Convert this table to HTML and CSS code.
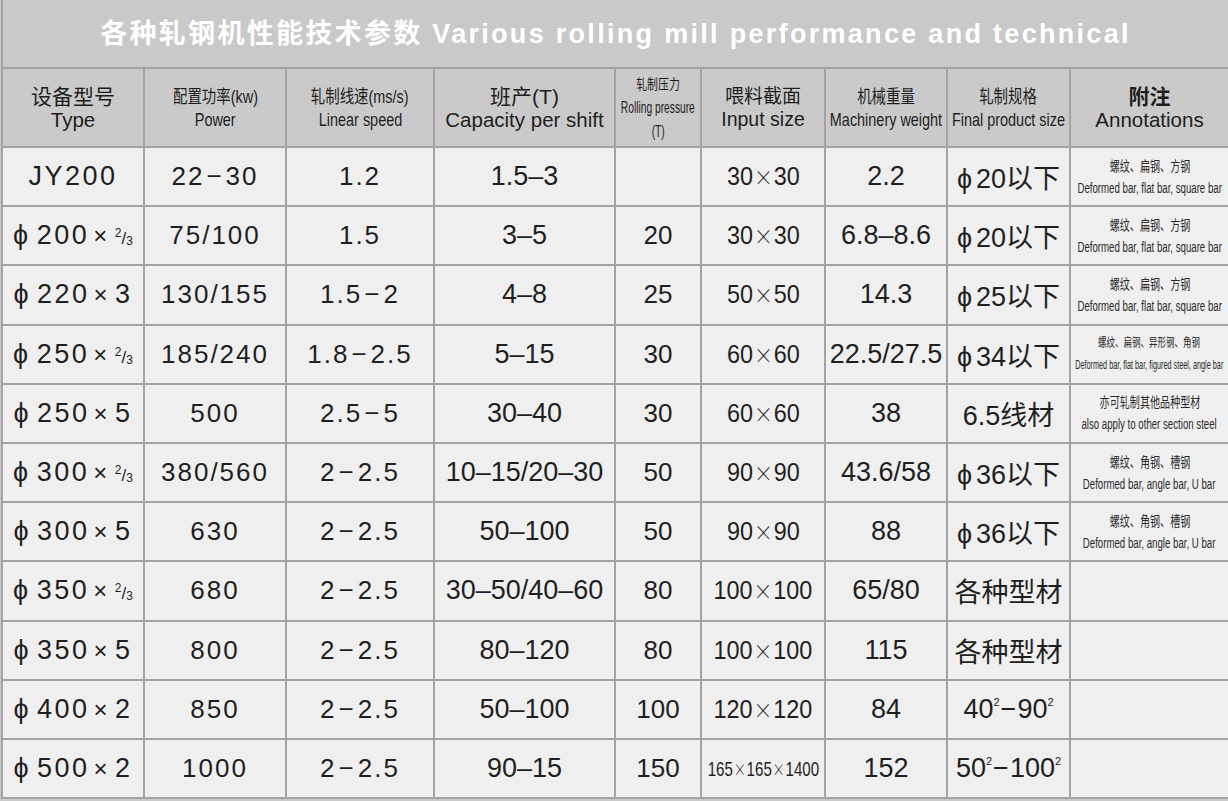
FILE: index.html
```html
<!DOCTYPE html>
<html lang="zh-CN">
<head>
<meta charset="utf-8">
<title>各种轧钢机性能技术参数</title>
<link rel="stylesheet" href="styles.css">
</head>
<body>
<div class="sheet">
  <div class="title">各种轧钢机性能技术参数 Various rolling mill performance and technical</div>
  <div class="grid">
    <div class="h"><span class="zh">设备型号</span><span class="en">Type</span></div>
    <div class="h"><span class="nar">配置功率(kw)</span><span class="nar">Power</span></div>
    <div class="h"><span class="nar">轧制线速(ms/s)</span><span class="nar">Linear speed</span></div>
    <div class="h"><span class="zh">班产(T)</span><span class="en">Capacity per shift</span></div>
    <div class="h tri"><span class="tz">轧制压力</span><span class="te">Rolling pressure</span><span class="te">(T)</span></div>
    <div class="h"><span class="zh2">喂料截面</span><span class="en2">Input size</span></div>
    <div class="h"><span class="nar">机械重量</span><span class="nar">Machinery weight</span></div>
    <div class="h"><span class="nar">轧制规格</span><span class="nar">Final product size</span></div>
    <div class="h"><span class="zh bold">附注</span><span class="en">Annotations</span></div>

    <!-- row 1 -->
    <div class="c k"><span>JY200</span></div>
    <div class="c p">22<span class="d">−</span>30</div>
    <div class="c s">1.2</div>
    <div class="c cap">1.5–3</div>
    <div class="c rp"></div>
    <div class="c"><span class="in">30<span class="mx">×</span>30</span></div>
    <div class="c w">2.2</div>
    <div class="c f"><span><span class="phi">ϕ</span>20以下</span></div>
    <div class="c a"><span class="az">螺纹、扁钢、方钢</span><span class="ae">Deformed bar, flat bar, square bar</span></div>

    <!-- row 2 -->
    <div class="c k"><span><span class="phi">ϕ</span>200<span class="x">×</span><span class="frac"><sup>2</sup>/<sub>3</sub></span></span></div>
    <div class="c p">75/100</div>
    <div class="c s">1.5</div>
    <div class="c cap">3–5</div>
    <div class="c rp">20</div>
    <div class="c"><span class="in">30<span class="mx">×</span>30</span></div>
    <div class="c w">6.8–8.6</div>
    <div class="c f"><span><span class="phi">ϕ</span>20以下</span></div>
    <div class="c a"><span class="az">螺纹、扁钢、方钢</span><span class="ae">Deformed bar, flat bar, square bar</span></div>

    <!-- row 3 -->
    <div class="c k"><span><span class="phi">ϕ</span>220<span class="x">×</span>3</span></div>
    <div class="c p">130/155</div>
    <div class="c s">1.5<span class="d">−</span>2</div>
    <div class="c cap">4–8</div>
    <div class="c rp">25</div>
    <div class="c"><span class="in">50<span class="mx">×</span>50</span></div>
    <div class="c w">14.3</div>
    <div class="c f"><span><span class="phi">ϕ</span>25以下</span></div>
    <div class="c a"><span class="az">螺纹、扁钢、方钢</span><span class="ae">Deformed bar, flat bar, square bar</span></div>

    <!-- row 4 -->
    <div class="c k"><span><span class="phi">ϕ</span>250<span class="x">×</span><span class="frac"><sup>2</sup>/<sub>3</sub></span></span></div>
    <div class="c p">185/240</div>
    <div class="c s">1.8<span class="d">−</span>2.5</div>
    <div class="c cap">5–15</div>
    <div class="c rp">30</div>
    <div class="c"><span class="in">60<span class="mx">×</span>60</span></div>
    <div class="c w">22.5/27.5</div>
    <div class="c f"><span><span class="phi">ϕ</span>34以下</span></div>
    <div class="c a"><span class="az sm">螺纹、扁钢、异形钢、角钢</span><span class="ae sm">Deformed bar, flat bar, figured steel, angle bar</span></div>

    <!-- row 5 -->
    <div class="c k"><span><span class="phi">ϕ</span>250<span class="x">×</span>5</span></div>
    <div class="c p">500</div>
    <div class="c s">2.5<span class="d">−</span>5</div>
    <div class="c cap">30–40</div>
    <div class="c rp">30</div>
    <div class="c"><span class="in">60<span class="mx">×</span>60</span></div>
    <div class="c w">38</div>
    <div class="c f"><span>6.5线材</span></div>
    <div class="c a"><span class="az">亦可轧制其他品种型材</span><span class="ae">also apply to other section steel</span></div>

    <!-- row 6 -->
    <div class="c k"><span><span class="phi">ϕ</span>300<span class="x">×</span><span class="frac"><sup>2</sup>/<sub>3</sub></span></span></div>
    <div class="c p">380/560</div>
    <div class="c s">2<span class="d">−</span>2.5</div>
    <div class="c cap">10–15/20–30</div>
    <div class="c rp">50</div>
    <div class="c"><span class="in">90<span class="mx">×</span>90</span></div>
    <div class="c w">43.6/58</div>
    <div class="c f"><span><span class="phi">ϕ</span>36以下</span></div>
    <div class="c a"><span class="az">螺纹、角钢、槽钢</span><span class="ae">Deformed bar, angle bar, U bar</span></div>

    <!-- row 7 -->
    <div class="c k"><span><span class="phi">ϕ</span>300<span class="x">×</span>5</span></div>
    <div class="c p">630</div>
    <div class="c s">2<span class="d">−</span>2.5</div>
    <div class="c cap">50–100</div>
    <div class="c rp">50</div>
    <div class="c"><span class="in">90<span class="mx">×</span>90</span></div>
    <div class="c w">88</div>
    <div class="c f"><span><span class="phi">ϕ</span>36以下</span></div>
    <div class="c a"><span class="az">螺纹、角钢、槽钢</span><span class="ae">Deformed bar, angle bar, U bar</span></div>

    <!-- row 8 -->
    <div class="c k"><span><span class="phi">ϕ</span>350<span class="x">×</span><span class="frac"><sup>2</sup>/<sub>3</sub></span></span></div>
    <div class="c p">680</div>
    <div class="c s">2<span class="d">−</span>2.5</div>
    <div class="c cap">30–50/40–60</div>
    <div class="c rp">80</div>
    <div class="c"><span class="in">100<span class="mx">×</span>100</span></div>
    <div class="c w">65/80</div>
    <div class="c f"><span>各种型材</span></div>
    <div class="c a"></div>

    <!-- row 9 -->
    <div class="c k"><span><span class="phi">ϕ</span>350<span class="x">×</span>5</span></div>
    <div class="c p">800</div>
    <div class="c s">2<span class="d">−</span>2.5</div>
    <div class="c cap">80–120</div>
    <div class="c rp">80</div>
    <div class="c"><span class="in">100<span class="mx">×</span>100</span></div>
    <div class="c w">115</div>
    <div class="c f"><span>各种型材</span></div>
    <div class="c a"></div>

    <!-- row 10 -->
    <div class="c k"><span><span class="phi">ϕ</span>400<span class="x">×</span>2</span></div>
    <div class="c p">850</div>
    <div class="c s">2<span class="d">−</span>2.5</div>
    <div class="c cap">50–100</div>
    <div class="c rp">100</div>
    <div class="c"><span class="in">120<span class="mx">×</span>120</span></div>
    <div class="c w">84</div>
    <div class="c f"><span>40<sup class="sq">2</sup><span class="d2">−</span>90<sup class="sq">2</sup></span></div>
    <div class="c a"></div>

    <!-- row 11 -->
    <div class="c k"><span><span class="phi">ϕ</span>500<span class="x">×</span>2</span></div>
    <div class="c p">1000</div>
    <div class="c s">2<span class="d">−</span>2.5</div>
    <div class="c cap">90–15</div>
    <div class="c rp">150</div>
    <div class="c"><span class="in small">165<span class="mx">×</span>165<span class="mx">×</span>1400</span></div>
    <div class="c w">152</div>
    <div class="c f"><span>50<sup class="sq">2</sup><span class="d2">−</span>100<sup class="sq">2</sup></span></div>
    <div class="c a"></div>
  </div>
</div>
</body>
</html>
```

FILE: styles.css
```css
* {
  box-sizing: border-box;
}

body {
  margin: 0;
  background: #c9c9c9;
  font-family: "Liberation Sans", "Noto Sans CJK SC", sans-serif;
  color: #222;
}

.sheet {
  margin-left: 1px;
  width: 1227px;
  border-left: 2px solid #a3a3a3;
}

.title {
  height: 69px;
  padding-bottom: 5px;
  border-bottom: 2px solid #a3a3a3;
  background: #c9c9c9;
  color: #fff;
  font-weight: bold;
  font-size: 27px;
  letter-spacing: 2.3px;
  display: flex;
  align-items: center;
  justify-content: center;
  white-space: nowrap;
}

.grid {
  display: grid;
  grid-template-columns: 140px 140px 146px 179px 84px 122px 120px 121px 157px;
  grid-template-rows: 77px repeat(11, 57.2px);
  gap: 2px;
  background: #a3a3a3;
  padding-bottom: 2px;
}

/* header cells */
.h {
  background: #cacaca;
  display: flex;
  flex-direction: column;
  align-items: center;
  justify-content: center;
  line-height: 23px;
  white-space: nowrap;
  color: #1e1e1e;
}

.h .zh {
  font-size: 21px;
}

.h .en {
  font-size: 20.5px;
}

.h .zh2 {
  font-size: 19px;
}

.h .en2 {
  font-size: 19.5px;
}

.h .bold {
  font-weight: bold;
}

.h .nar {
  font-size: 18.5px;
  transform: scaleX(0.78);
}

.h.tri {
  line-height: 24px;
}

.h .tz {
  font-size: 14px;
  transform: scaleX(0.78);
}

.h .te {
  font-size: 16px;
  transform: scaleX(0.64);
}

/* data cells */
.c {
  background: #efefef;
  display: flex;
  align-items: center;
  justify-content: center;
  font-size: 26px;
  white-space: nowrap;
  color: #1f1f1f;
}

.k {
  font-size: 27px;
  letter-spacing: 2.5px;
}

.phi {
  margin-right: 6px;
}

.x {
  margin: 0 5px 0 4px;
  font-size: 24px;
}

.frac {
  font-size: 17px;
  letter-spacing: 0;
}

.frac sup {
  font-size: 12px;
  vertical-align: 7px;
}

.frac sub {
  font-size: 12px;
  vertical-align: -1px;
}

.p {
  letter-spacing: 2px;
}

.s {
  letter-spacing: 2px;
}

.d {
  margin: 0 2px;
}

.cap {
  font-size: 27px;
}

.rp {
  font-size: 26px;
}

.in {
  display: inline-block;
  transform: scaleX(0.9);
}

.in .mx {
  font-family: "Noto Sans CJK SC", sans-serif;
  font-size: 21px;
  font-weight: 300;
  margin: 0 1px;
}

.in.small {
  font-size: 21px;
  transform: scaleX(0.72);
}

.in.small .mx {
  font-size: 17px;
}

.w {
  font-size: 27px;
}

.f {
  font-size: 27px;
}

.f .phi {
  margin-right: 4px;
}

.sq {
  font-size: 11px;
  vertical-align: 12px;
}

.d2 {
  margin: 0 1px;
}

/* annotations */
.a {
  flex-direction: column;
  line-height: 22px;
  color: #2a2a2a;
}

.az {
  font-size: 14px;
  transform: scaleX(0.72);
}

.ae {
  font-size: 14px;
  transform: scaleX(0.69);
}

.az.sm {
  font-size: 12.5px;
  transform: scaleX(0.68);
}

.ae.sm {
  font-size: 13px;
  transform: scaleX(0.56);
}
```
